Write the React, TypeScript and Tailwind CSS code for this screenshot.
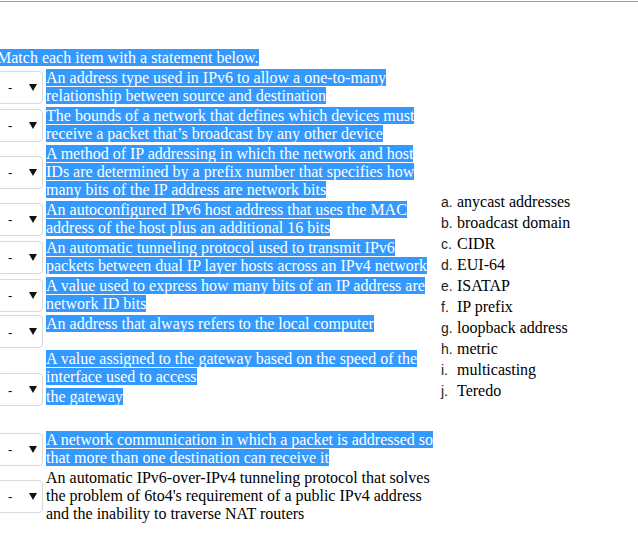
import React from "react";

const serif = { fontFamily: '"Liberation Serif", "Times New Roman", serif' };

const rows: { text: string; hl: boolean; extra?: string }[] = [
  { text: "An address type used in IPv6 to allow a one-to-many relationship between source and destination", hl: true },
  { text: "The bounds of a network that defines which devices must receive a packet that\u2019s broadcast by any other device", hl: true },
  { text: "A method of IP addressing in which the network and host IDs are determined by a prefix number that specifies how many bits of the IP address are network bits", hl: true },
  { text: "An autoconfigured IPv6 host address that uses the MAC address of the host plus an additional 16 bits", hl: true },
  { text: "An automatic tunneling protocol used to transmit IPv6 packets between dual IP layer hosts across an IPv4 network", hl: true },
  { text: "A value used to express how many bits of an IP address are network ID bits", hl: true },
  { text: "An address that always refers to the local computer", hl: true },
  { text: "A value assigned to the gateway based on the speed of the interface used to access", hl: true, extra: "the gateway" },
  { text: "A network communication in which a packet is addressed so that more than one destination can receive it", hl: true },
  { text: "An automatic IPv6-over-IPv4 tunneling protocol that solves the problem of 6to4's requirement of a public IPv4 address and the inability to traverse NAT routers", hl: false },
];

const options = [
  ["a.", "anycast addresses"],
  ["b.", "broadcast domain"],
  ["c.", "CIDR"],
  ["d.", "EUI-64"],
  ["e.", "ISATAP"],
  ["f.", "IP prefix"],
  ["g.", "loopback address"],
  ["h.", "metric"],
  ["i.", "multicasting"],
  ["j.", "Teredo"],
];

function Select() {
  return (
    <div className="w-[46px] h-[33px] border border-[#d9d9d9] rounded-[4px] bg-white flex items-center justify-between pl-[10px] pr-[5px] shrink-0">
      <span className="text-[13px] text-black mt-[2px]" style={{ fontFamily: '"Liberation Sans", Arial, sans-serif' }}>-</span>
      <svg width="8" height="7" viewBox="0 0 8 7">
        <path d="M0 0 L8 0 L4 7 Z" fill="#111" />
      </svg>
    </div>
  );
}

export default function App() {
  return (
    <div className="w-[638px] h-[545px] bg-white overflow-hidden" style={serif}>
      <div className="mt-px h-px bg-[#a0a0a0]" />
      <div className="ml-[-3px] mt-[47px] text-[16px] leading-[18px] text-black">
        <div className="mb-[2px]">
          <span className="bg-[#3399ff] text-white">Match each item with a statement below.</span>
        </div>
        <div className="flex items-center gap-[2px]">
          <div className="flex flex-col gap-[2px] w-[442px] shrink-0">
            {rows.map((r, i) => (
              <div key={i} className="flex gap-[3px]">
                <div className="flex items-center">
                  <Select />
                </div>
                <div className={"w-[393px] " + (r.extra ? "pb-[23px]" : "")}>
                  {r.hl ? (
                    <span className="bg-[#3399ff] text-white">{r.text}</span>
                  ) : (
                    <span>{r.text}</span>
                  )}
                  {r.extra && (
                    <div className="mt-[2px]">
                      <span className="bg-[#3399ff] text-white">{r.extra}</span>
                    </div>
                  )}
                </div>
              </div>
            ))}
          </div>
          <div className="flex flex-col">
            {options.map(([l, t]) => (
              <div key={l} className="flex h-[21px] items-center">
                <span
                  className="w-[16px] text-[14px] text-[#222]"
                  style={{ fontFamily: '"Liberation Sans", Arial, sans-serif' }}
                >
                  {l}
                </span>
                <span className="text-[16px]">{t}</span>
              </div>
            ))}
          </div>
        </div>
      </div>
    </div>
  );
}
